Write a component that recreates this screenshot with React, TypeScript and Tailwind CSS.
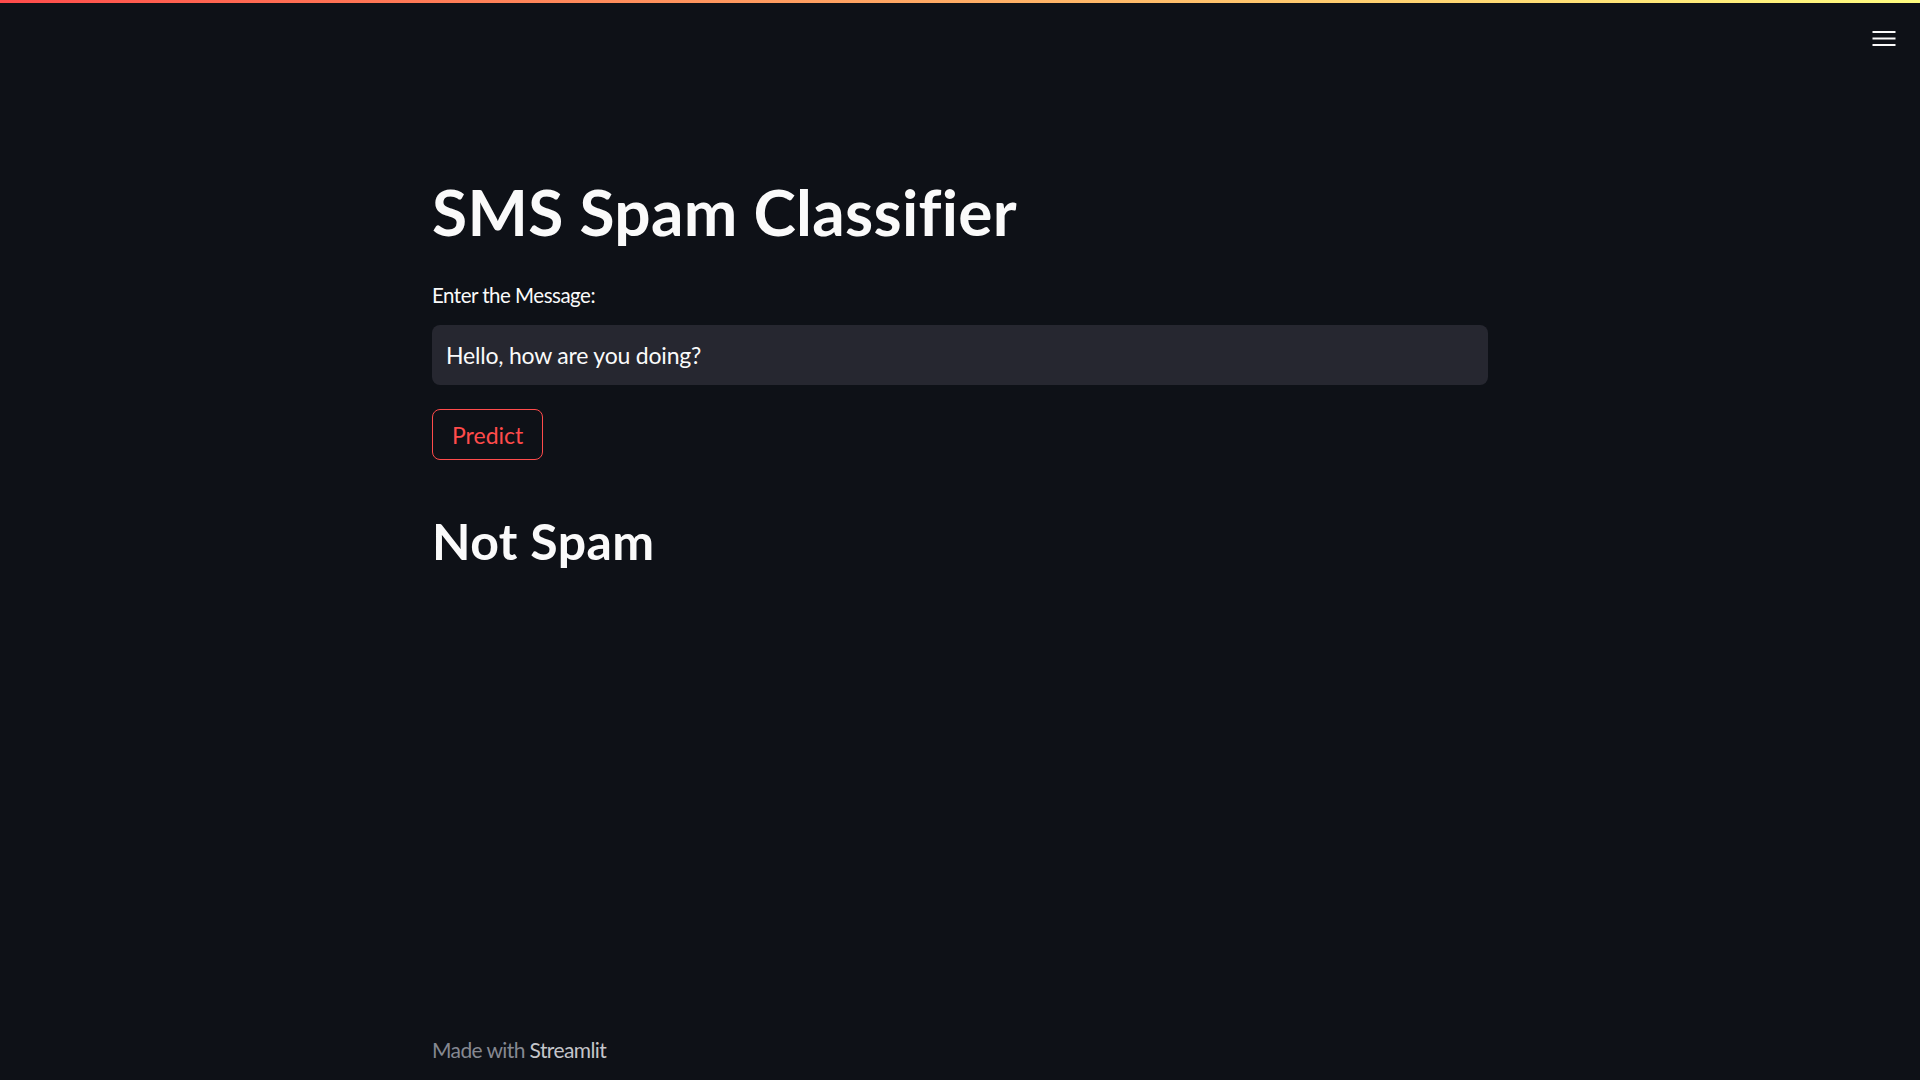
export default function App() {
  return (
    <div
      className="relative min-h-screen bg-[#0e1117] flex flex-col text-[#fafafa]"
      style={{ fontFamily: "Lato, 'Noto Sans', sans-serif" }}
    >
      {/* decoration bar */}
      <div className="absolute top-0 left-0 right-0 h-[3px] bg-gradient-to-r from-[#ff4b4b] to-[#fffd80]" />

      {/* menu button */}
      <button className="absolute top-[23px] right-[20px] w-[32px] h-[32px] flex items-center justify-center text-[#fafafa]">
        <svg width="24" height="16" viewBox="0 0 24 16">
          <rect x="0.5" y="0" width="23" height="2" fill="currentColor" />
          <rect x="0.5" y="6.5" width="23" height="2" fill="currentColor" />
          <rect x="0.5" y="13" width="23" height="2" fill="currentColor" />
        </svg>
      </button>

      <main className="w-[1056px] mx-auto pt-[174px] flex flex-col">
        <h1 className="text-[64px] font-bold leading-[1.2] tracking-[0.3px]">SMS Spam Classifier</h1>

        <label className="mt-[30px] text-[20.5px] leading-[1.4] tracking-[-0.5px]">Enter the Message:</label>
        <div className="mt-[16px] h-[60px] rounded-[8px] bg-[#262730] flex items-center px-[14px]">
          <span className="text-[23px] tracking-[-0.2px]">Hello, how are you doing?</span>
        </div>

        <div className="mt-[24px]">
          <button className="h-[51px] px-[19px] rounded-[8px] border border-[#ff4b4b] text-[#ff4b4b] text-[23px] bg-[#0e1117]">
            Predict
          </button>
        </div>

        <h2 className="mt-[51px] text-[50px] font-bold leading-[1.2] tracking-[0.4px]">Not Spam</h2>
      </main>

      <footer className="mt-auto w-[1056px] mx-auto pb-[16px] text-[21px] leading-[1.4] tracking-[-0.6px] text-[#858891]">
        Made with <span className="text-[#c4c5ca]">Streamlit</span>
      </footer>
    </div>
  );
}
